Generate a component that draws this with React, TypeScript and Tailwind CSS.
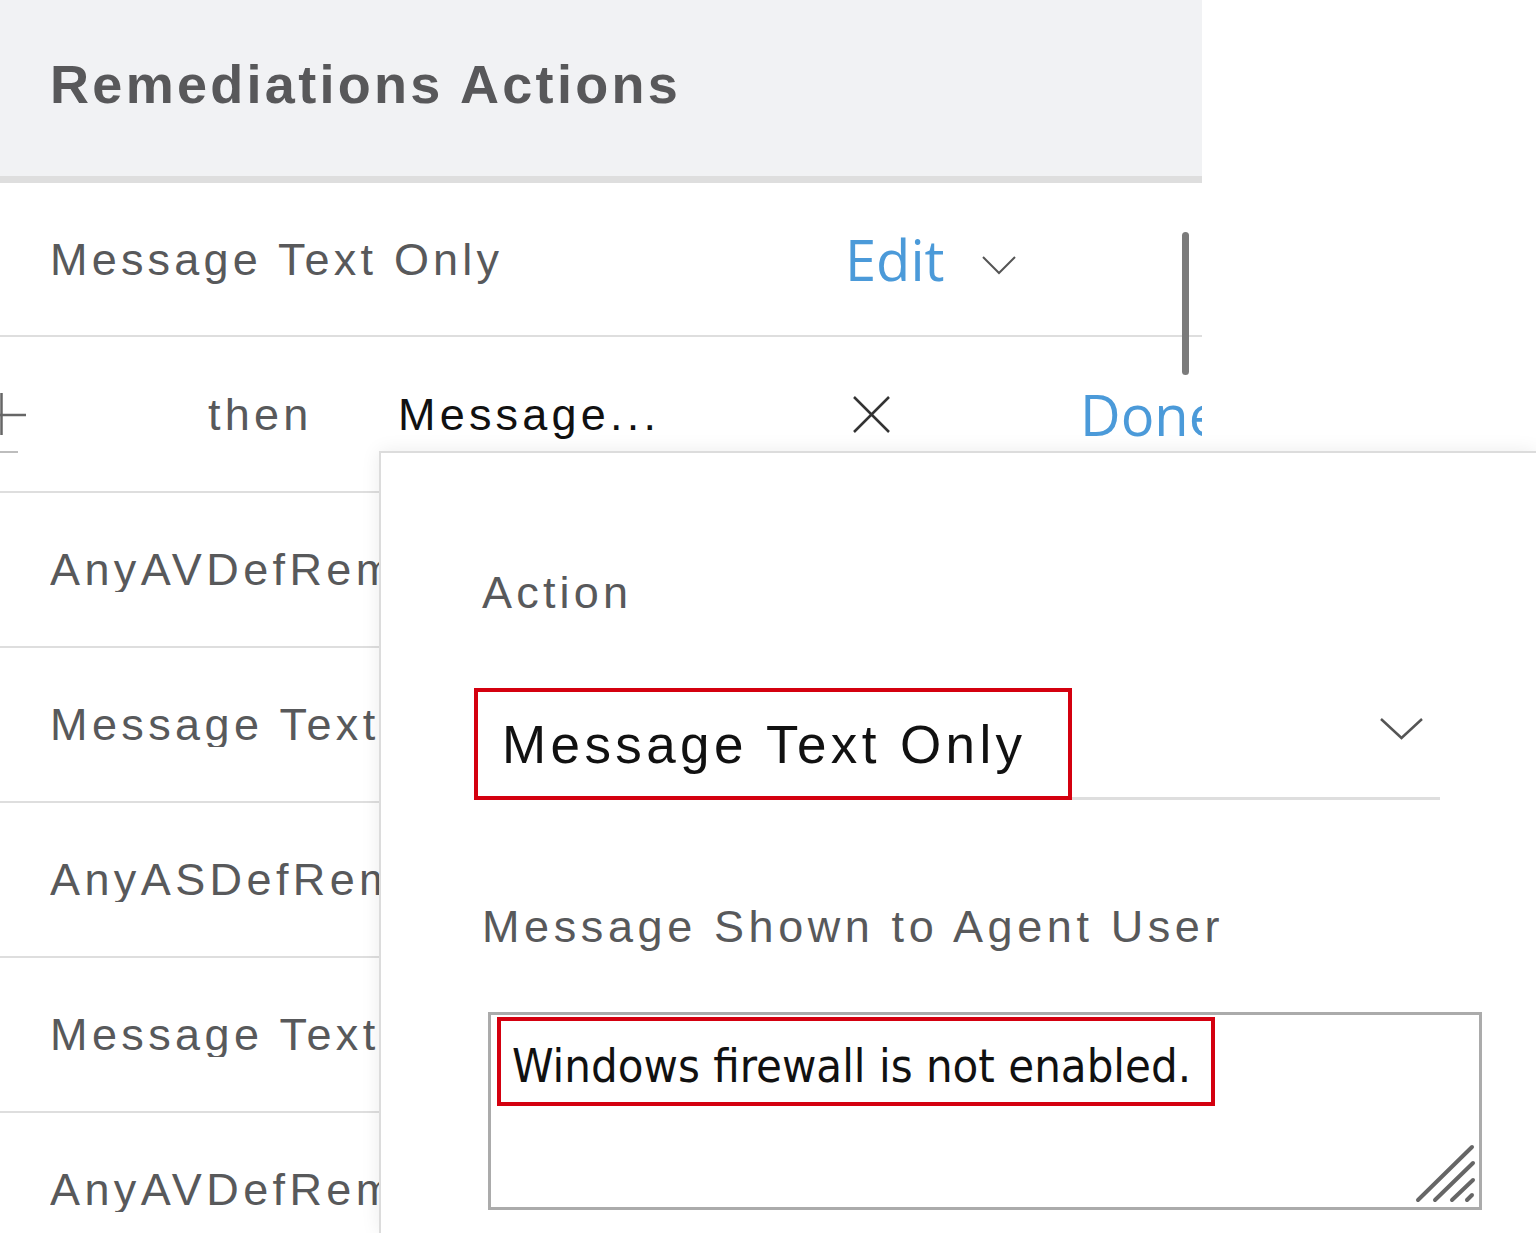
import React from "react";

const rows = [
  "AnyAVDefRemediationWin",
  "Message Text Only",
  "AnyASDefRemediationWin",
  "Message Text Only",
  "AnyAVDefRemediationWin",
];

export default function App() {
  return (
    <div className="relative w-[1536px] h-[1233px] overflow-hidden bg-white font-['Liberation_Sans',Arial,sans-serif]">
      <div className="w-[1202px] h-full overflow-hidden">
        <div className="h-[176px] bg-[#f1f2f4] pl-[50px] pt-[57px]">
          <h1 className="text-[54px] leading-none font-bold tracking-[3.3px] text-[#58585a] whitespace-nowrap">
            Remediations Actions
          </h1>
        </div>
        <div className="h-[7px] bg-[#dedede]" />

        <div className="h-[154px] border-b-2 border-[#dedede] flex items-center pl-[50px] whitespace-nowrap">
          <span className="shrink-0 w-[795px] text-[45px] leading-none tracking-[4.2px] text-[#58595b]">
            Message Text Only
          </span>
          <span className="shrink-0 font-['Open_Sans',sans-serif] text-[56px] leading-none text-[#4b9ad9]">
            Edit
          </span>
          <svg className="shrink-0 ml-[38px] mt-[12px]" width="34" height="19" viewBox="0 0 34 19">
            <polyline points="1,1 17,17 33,1" fill="none" stroke="#555" strokeWidth="2" />
          </svg>
        </div>

        <div className="relative h-[156px] border-b-2 border-[#dedede] flex items-center whitespace-nowrap">
          <svg width="26" height="42" viewBox="0 0 26 42" className="shrink-0">
            <line x1="1.5" y1="0" x2="1.5" y2="42" stroke="#666" strokeWidth="2.5" />
            <line x1="0" y1="22" x2="26" y2="22" stroke="#666" strokeWidth="2.5" />
          </svg>
          <div className="absolute left-0 top-[114px] w-[18px] h-[2px] bg-[#bdbdbd]" />
          <span className="shrink-0 ml-[182px] w-[190px] text-[45px] leading-none tracking-[4.2px] text-[#58595b]">
            then
          </span>
          <span className="shrink-0 w-[455px] text-[45px] leading-none tracking-[4.2px] text-[#111]">
            Message...
          </span>
          <svg width="37" height="37" viewBox="0 0 37 37" className="shrink-0">
            <line x1="1" y1="1" x2="36" y2="36" stroke="#333" strokeWidth="2.5" />
            <line x1="36" y1="1" x2="1" y2="36" stroke="#333" strokeWidth="2.5" />
          </svg>
          <span className="shrink-0 ml-[190px] font-['Open_Sans',sans-serif] text-[56px] leading-none text-[#4b9ad9]">
            Done
          </span>
        </div>

        {rows.map((r, i) => (
          <div
            key={i}
            className="h-[155px] border-b-2 border-[#dedede] flex items-center pl-[50px] whitespace-nowrap"
          >
            <div className="w-[330px] overflow-hidden">
              <span className="text-[45px] leading-none tracking-[4.4px] text-[#58595b]">{r}</span>
            </div>
          </div>
        ))}
      </div>

      <div className="absolute left-[1182px] top-[232px] w-[7px] h-[143px] rounded-full bg-[#7b7b7b]" />

      <div className="absolute left-[379px] top-[451px] right-0 bottom-0 bg-white border-t-2 border-l-2 border-[#dcdcdc] shadow-[0_0_18px_rgba(0,0,0,0.08)] pl-[101px] pt-[117px]">
        <div className="text-[45px] leading-none tracking-[4.2px] text-[#58595b] whitespace-nowrap">Action</div>

        <div className="relative mt-[73px] w-[958px] h-[112px] border-b-[3px] border-[#dedede]">
          <div className="absolute -left-[8px] top-0 h-[112px] w-[598px] border-4 border-[#d4000f] flex items-center pl-[24px] whitespace-nowrap">
            <span className="text-[53px] leading-none tracking-[4.4px] text-[#111]">Message Text Only</span>
          </div>
          <svg className="absolute right-[17px] top-[30px]" width="43" height="22" viewBox="0 0 43 22">
            <polyline points="1,1 21.5,20 42,1" fill="none" stroke="#555" strokeWidth="2.5" />
          </svg>
        </div>

        <div className="mt-[104px] text-[45px] leading-none tracking-[4.6px] text-[#58595b] whitespace-nowrap">
          Message Shown to Agent User
        </div>

        <div className="relative mt-[63px] ml-[6px] w-[994px] h-[198px] border-[3px] border-[#ababab]">
          <div className="absolute left-[6px] top-[2px] w-[718px] h-[89px] border-4 border-[#d4000f] pl-[11px] pt-[22px] whitespace-nowrap">
            <span className="font-['DejaVu_Sans_Condensed','DejaVu_Sans',sans-serif] text-[46.8px] leading-none text-[#111]">
              Windows firewall is not enabled.
            </span>
          </div>
          <svg className="absolute left-[924px] top-[128px]" width="62" height="60" viewBox="0 0 62 60">
            <g stroke="#666" strokeWidth="4" strokeLinecap="round">
              <line x1="57" y1="4" x2="3" y2="57" />
              <line x1="58" y1="20" x2="20" y2="57" />
              <line x1="58" y1="37" x2="37" y2="57" />
              <line x1="57" y1="52" x2="52" y2="57" />
            </g>
          </svg>
        </div>
      </div>
    </div>
  );
}
